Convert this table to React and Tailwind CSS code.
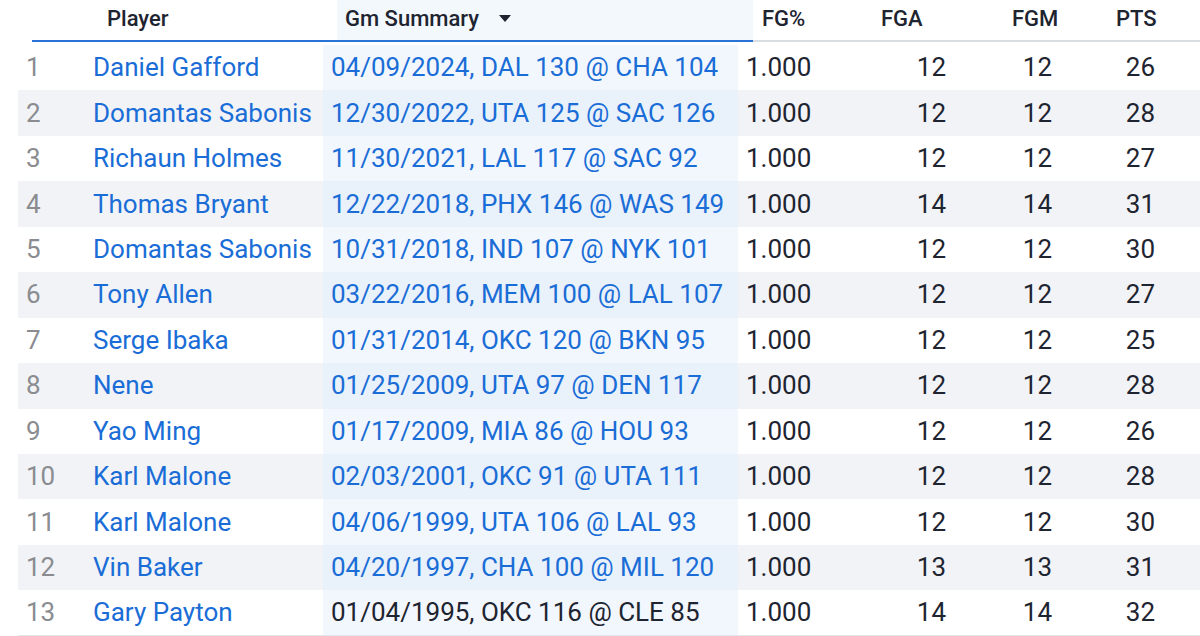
const rows = [
  ['Daniel Gafford', '04/09/2024, DAL 130 @ CHA 104', '12', '12', '26'],
  ['Domantas Sabonis', '12/30/2022, UTA 125 @ SAC 126', '12', '12', '28'],
  ['Richaun Holmes', '11/30/2021, LAL 117 @ SAC 92', '12', '12', '27'],
  ['Thomas Bryant', '12/22/2018, PHX 146 @ WAS 149', '14', '14', '31'],
  ['Domantas Sabonis', '10/31/2018, IND 107 @ NYK 101', '12', '12', '30'],
  ['Tony Allen', '03/22/2016, MEM 100 @ LAL 107', '12', '12', '27'],
  ['Serge Ibaka', '01/31/2014, OKC 120 @ BKN 95', '12', '12', '25'],
  ['Nene', '01/25/2009, UTA 97 @ DEN 117', '12', '12', '28'],
  ['Yao Ming', '01/17/2009, MIA 86 @ HOU 93', '12', '12', '26'],
  ['Karl Malone', '02/03/2001, OKC 91 @ UTA 111', '12', '12', '28'],
  ['Karl Malone', '04/06/1999, UTA 106 @ LAL 93', '12', '12', '30'],
  ['Vin Baker', '04/20/1997, CHA 100 @ MIL 120', '13', '13', '31'],
  ['Gary Payton', '01/04/1995, OKC 116 @ CLE 85', '14', '14', '32'],
];

export default function App() {
  return (
    <div className="w-[1200px] h-[636px] overflow-hidden bg-white font-['Roboto',sans-serif]">
      {/* header */}
      <div className="flex h-[42px] ml-[32px] text-[22px] font-medium text-[#1e2430]">
        <div className="w-[70px] border-b-2 border-[#2a73d6]" />
        <div className="w-[235px] pl-[5px] pt-[2px] border-b-2 border-[#2a73d6]">Player</div>
        <div className="w-[416px] pl-[8px] pt-[2px] bg-[#f3f8fd] border-b-2 border-[#2a73d6] flex items-start gap-[20px]">
          <span>Gm Summary</span>
          <svg width="12" height="7" viewBox="0 0 12 7" className="mt-[13px]">
            <path d="M0 0 L12 0 L6 7 Z" fill="#1e2430" />
          </svg>
        </div>
        <div className="flex flex-1 border-b-2 border-[#d8dde4]">
          <div className="w-[122px] pl-[9px] pt-[2px]">FG%</div>
          <div className="w-[137px] pl-[6px] pt-[2px]">FGA</div>
          <div className="w-[104px] pt-[2px]">FGM</div>
          <div className="pt-[2px]">PTS</div>
        </div>
      </div>

      {/* body */}
      <div className="mt-[3px] ml-[18px] text-[26px]">
        {rows.map((r, i) => (
          <div
            key={i}
            className={
              'flex items-center h-[45.45px] ' +
              (i % 2 === 1 ? 'bg-[#f1f3f7]' : 'bg-white') +
              (i === rows.length - 1 ? ' border-b border-[#e3e6ea]' : '')
            }
          >
            <div className="w-[70px] pl-[8px] text-[#8a8c90]">{i + 1}</div>
            <div className="w-[235px] pl-[5px] text-[#1a6dd6] whitespace-nowrap">{r[0]}</div>
            <div
              className={
                'w-[415px] h-full flex items-center pl-[8px] whitespace-nowrap ' +
                (i % 2 === 1 ? 'bg-[#e9f1fa] ' : 'bg-[#f2f7fd] ') +
                (i === rows.length - 1 ? 'text-[#1e2430]' : 'text-[#1a6dd6]')
              }
            >
              {r[1]}
            </div>
            <div className="w-[122px] pl-[8px] text-[#1e2430]">1.000</div>
            <div className="w-[86px] text-right text-[#1e2430]">{r[2]}</div>
            <div className="w-[106px] text-right text-[#1e2430]">{r[3]}</div>
            <div className="w-[103px] text-right text-[#1e2430]">{r[4]}</div>
          </div>
        ))}
      </div>
    </div>
  );
}
